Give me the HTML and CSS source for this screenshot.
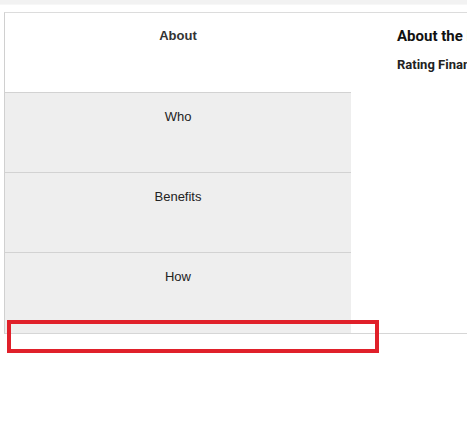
FILE: index.html
```html
<!DOCTYPE html>
<html>
<head>
<meta charset="utf-8">
<link rel="stylesheet" href="styles.css">
</head>
<body>
<div class="topstrip"></div>
<div class="panel">
  <div class="tablist">
    <div class="tab active">About</div>
    <div class="tab">Who</div>
    <div class="tab">Benefits</div>
    <div class="tab last">How</div>
  </div>
  <div class="content">
    <h2 class="title">About the Rating</h2>
    <p class="sub">Rating Financial Strength</p>
  </div>
</div>
<div class="highlight"></div>
</body>
</html>
```
FILE: styles.css
```css
html, body {
  margin: 0;
  padding: 0;
  background: #fff;
  font-family: "Liberation Sans", Arial, sans-serif;
}
.topstrip {
  width: 467px;
  height: 4px;
  background: #f2f2f2;
  border-bottom: 1px solid #f7f7f7;
}
.panel {
  margin: 7px 0 0 4px;
  width: 462px;
  border-top: 1px solid #dcdcdc;
  border-left: 1px solid #d0d0d0;
  border-bottom: 1px solid #d6d6d6;
  display: flex;
  overflow: hidden;
}
.tablist {
  width: 346px;
  flex: none;
  display: flex;
  flex-direction: column;
}
.tab {
  border-bottom: 1px solid #d2d2d2;
  background: #eeeeee;
  color: #222;
  font-size: 13px;
  line-height: 15px;
  text-align: center;
  padding-top: 16px;
  box-sizing: content-box;
  height: 63px;
}
.tab.active {
  background: #fff;
  font-weight: bold;
  color: #333;
  padding-top: 15px;
  height: 64px;
}
.tab.last {
  border-bottom: none;
  height: 64px;
}
.content {
  padding: 14px 0 0 46px;
  white-space: nowrap;
  font-family: Roboto, "Liberation Sans", sans-serif;
  color: #111;
}
.title {
  margin: 0;
  font-size: 15px;
  line-height: 18px;
  font-weight: bold;
}
.sub {
  margin: 12px 0 0;
  font-size: 13px;
  line-height: 15px;
  font-weight: bold;
  color: #222;
}
.highlight {
  position: absolute;
  left: 7px;
  top: 320px;
  width: 364px;
  height: 25px;
  border: 4px solid #e0202a;
}
```
